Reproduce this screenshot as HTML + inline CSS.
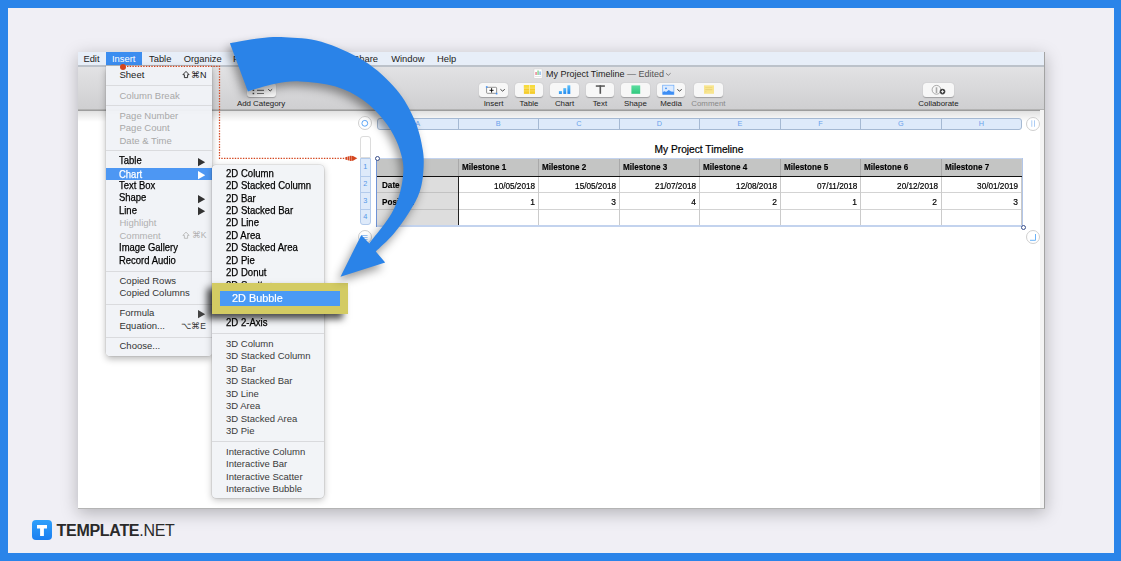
<!DOCTYPE html>
<html><head><meta charset="utf-8"><style>
html,body{margin:0;padding:0;}
body{width:1121px;height:561px;position:relative;overflow:hidden;background:#2a84e9;font-family:"Liberation Sans", sans-serif;}
</style></head><body>
<div style="position:absolute;left:8px;top:8px;width:1106px;height:545px;background:#f0eff5;"></div>
<div style="position:absolute;left:78px;top:52px;width:967px;height:457px;background:#fff;box-shadow:0 4px 16px rgba(0,0,0,.26);"></div>
<div style="position:absolute;left:78px;top:52px;width:967px;height:13px;background:#e7eef8;"></div>
<div style="position:absolute;left:78px;top:65px;width:967px;height:1.5999999999999943px;background:#bcc2ca;"></div>
<div style="position:absolute;left:78px;top:66.6px;width:967px;height:42.400000000000006px;background:linear-gradient(#e2e2e4,#cfcfd1);"></div>
<div style="position:absolute;left:78px;top:109px;width:967px;height:1.5px;background:#b3b3b3;"></div>
<div style="position:absolute;left:78px;top:110px;width:962px;height:12px;background:linear-gradient(rgba(0,0,0,.13),rgba(0,0,0,0));"></div>
<div style="position:absolute;left:1040px;top:110px;width:4px;height:398px;background:#f4f4f4;"></div>
<div style="position:absolute;left:1044px;top:52px;width:1px;height:457px;background:#a3a3a3;"></div>
<div style="position:absolute;left:78px;top:508px;width:967px;height:1px;background:#b4b4b4;"></div>
<div style="position:absolute;left:83.4px;top:54.34px;font-size:9.4px;line-height:10.81px;color:#222;font-weight:normal;white-space:nowrap;">Edit</div>
<div style="position:absolute;left:106px;top:52px;width:36px;height:13px;background:#3b8df0;"></div>
<div style="position:absolute;left:112px;top:54.34px;font-size:9.4px;line-height:10.81px;color:#fff;font-weight:normal;white-space:nowrap;">Insert</div>
<div style="position:absolute;left:149px;top:54.34px;font-size:9.4px;line-height:10.81px;color:#222;font-weight:normal;white-space:nowrap;">Table</div>
<div style="position:absolute;left:183.7px;top:54.34px;font-size:9.4px;line-height:10.81px;color:#222;font-weight:normal;white-space:nowrap;">Organize</div>
<div style="position:absolute;left:233px;top:54.34px;font-size:9.4px;line-height:10.81px;color:#222;font-weight:normal;white-space:nowrap;">Format</div>
<div style="position:absolute;left:283px;top:54.34px;font-size:9.4px;line-height:10.81px;color:#222;font-weight:normal;white-space:nowrap;">Arrange</div>
<div style="position:absolute;left:325px;top:54.34px;font-size:9.4px;line-height:10.81px;color:#222;font-weight:normal;white-space:nowrap;">View</div>
<div style="position:absolute;left:353px;top:54.34px;font-size:9.4px;line-height:10.81px;color:#222;font-weight:normal;white-space:nowrap;">Share</div>
<div style="position:absolute;left:391.2px;top:54.34px;font-size:9.4px;line-height:10.81px;color:#222;font-weight:normal;white-space:nowrap;">Window</div>
<div style="position:absolute;left:437px;top:54.34px;font-size:9.4px;line-height:10.81px;color:#222;font-weight:normal;white-space:nowrap;">Help</div>
<div style="position:absolute;left:246.7px;top:83px;width:29.30000000000001px;height:13.5px;background:#f7f7f7;border-radius:3px;box-shadow:0 0.5px 1px rgba(0,0,0,.25);"></div>
<div style="position:absolute;left:221.0px;width:80px;top:99.02px;font-size:7.9px;line-height:9.08px;color:#222;font-weight:normal;white-space:nowrap;text-align:center;">Add Category</div>
<div style="position:absolute;left:534px;top:69px;width:8px;height:9px;background:#fff;border:0.5px solid #bbb;box-sizing:border-box;"></div>
<div style="position:absolute;left:545.9px;top:68.71px;font-size:9px;line-height:10.35px;color:#222;font-weight:normal;white-space:nowrap;">My Project Timeline <span style="color:#555">— Edited</span></div>
<div style="position:absolute;left:479.2px;top:83px;width:28.600000000000023px;height:14px;background:#f7f7f7;border-radius:3px;box-shadow:0 0.5px 1px rgba(0,0,0,.25);"></div>
<div style="position:absolute;left:463.5px;width:60px;top:99.02px;font-size:7.9px;line-height:9.08px;color:#222;font-weight:normal;white-space:nowrap;text-align:center;">Insert</div>
<div style="position:absolute;left:514.6px;top:83px;width:28.899999999999977px;height:14px;background:#f7f7f7;border-radius:3px;box-shadow:0 0.5px 1px rgba(0,0,0,.25);"></div>
<div style="position:absolute;left:499.04999999999995px;width:60px;top:99.02px;font-size:7.9px;line-height:9.08px;color:#222;font-weight:normal;white-space:nowrap;text-align:center;">Table</div>
<div style="position:absolute;left:550.2px;top:83px;width:28.699999999999932px;height:14px;background:#f7f7f7;border-radius:3px;box-shadow:0 0.5px 1px rgba(0,0,0,.25);"></div>
<div style="position:absolute;left:534.55px;width:60px;top:99.02px;font-size:7.9px;line-height:9.08px;color:#222;font-weight:normal;white-space:nowrap;text-align:center;">Chart</div>
<div style="position:absolute;left:585.7px;top:83px;width:28.399999999999977px;height:14px;background:#f7f7f7;border-radius:3px;box-shadow:0 0.5px 1px rgba(0,0,0,.25);"></div>
<div style="position:absolute;left:569.9000000000001px;width:60px;top:99.02px;font-size:7.9px;line-height:9.08px;color:#222;font-weight:normal;white-space:nowrap;text-align:center;">Text</div>
<div style="position:absolute;left:621px;top:83px;width:28.799999999999955px;height:14px;background:#f7f7f7;border-radius:3px;box-shadow:0 0.5px 1px rgba(0,0,0,.25);"></div>
<div style="position:absolute;left:605.4px;width:60px;top:99.02px;font-size:7.9px;line-height:9.08px;color:#222;font-weight:normal;white-space:nowrap;text-align:center;">Shape</div>
<div style="position:absolute;left:657px;top:83px;width:28.100000000000023px;height:14px;background:#f7f7f7;border-radius:3px;box-shadow:0 0.5px 1px rgba(0,0,0,.25);"></div>
<div style="position:absolute;left:641.05px;width:60px;top:99.02px;font-size:7.9px;line-height:9.08px;color:#222;font-weight:normal;white-space:nowrap;text-align:center;">Media</div>
<div style="position:absolute;left:694.2px;top:83px;width:28.399999999999977px;height:14px;background:#f7f7f7;border-radius:3px;box-shadow:0 0.5px 1px rgba(0,0,0,.25);"></div>
<div style="position:absolute;left:678.4000000000001px;width:60px;top:99.02px;font-size:7.9px;line-height:9.08px;color:#888;font-weight:normal;white-space:nowrap;text-align:center;">Comment</div>
<div style="position:absolute;left:922.9px;top:82.7px;width:31.300000000000068px;height:14.399999999999991px;background:#f7f7f7;border-radius:3px;box-shadow:0 0.5px 1px rgba(0,0,0,.25);"></div>
<div style="position:absolute;left:908.5px;width:60px;top:98.92px;font-size:7.9px;line-height:9.08px;color:#222;font-weight:normal;white-space:nowrap;text-align:center;">Collaborate</div>
<div style="position:absolute;left:357.8px;top:116.3px;width:14px;height:14px;border-radius:50%;border:1px solid #cfcfcf;box-sizing:border-box;background:#fff;"></div>
<div style="position:absolute;left:1026.3px;top:116.6px;width:14px;height:14px;border-radius:50%;border:1px solid #cfcfcf;box-sizing:border-box;background:#fff;"></div>
<div style="position:absolute;left:357.8px;top:230.3px;width:14px;height:14px;border-radius:50%;border:1px solid #cfcfcf;box-sizing:border-box;background:#fff;"></div>
<div style="position:absolute;left:1026.3px;top:230.2px;width:14px;height:14px;border-radius:50%;border:1px solid #cfcfcf;box-sizing:border-box;background:#fff;"></div>
<div style="position:absolute;left:377.4px;top:118.3px;width:644.2px;height:11.600000000000009px;background:#deeafa;border:1px solid #a5b9d3;border-radius:3px;box-sizing:border-box;"></div>
<div style="position:absolute;left:457.5px;top:118.3px;width:1.0px;height:11.600000000000009px;background:#a5b9d3;"></div>
<div style="position:absolute;left:537.8px;top:118.3px;width:1.0px;height:11.600000000000009px;background:#a5b9d3;"></div>
<div style="position:absolute;left:618.8px;top:118.3px;width:1.0px;height:11.600000000000009px;background:#a5b9d3;"></div>
<div style="position:absolute;left:699.0px;top:118.3px;width:1.0px;height:11.600000000000009px;background:#a5b9d3;"></div>
<div style="position:absolute;left:779.9px;top:118.3px;width:1.0px;height:11.600000000000009px;background:#a5b9d3;"></div>
<div style="position:absolute;left:860.0px;top:118.3px;width:1.0px;height:11.600000000000009px;background:#a5b9d3;"></div>
<div style="position:absolute;left:940.5px;top:118.3px;width:1.0px;height:11.600000000000009px;background:#a5b9d3;"></div>
<div style="position:absolute;left:407.7px;width:20px;top:120.07px;font-size:7.3px;line-height:8.39px;color:#6aa2ec;font-weight:normal;white-space:nowrap;text-align:center;">A</div>
<div style="position:absolute;left:488.15px;width:20px;top:120.07px;font-size:7.3px;line-height:8.39px;color:#6aa2ec;font-weight:normal;white-space:nowrap;text-align:center;">B</div>
<div style="position:absolute;left:568.8px;width:20px;top:120.07px;font-size:7.3px;line-height:8.39px;color:#6aa2ec;font-weight:normal;white-space:nowrap;text-align:center;">C</div>
<div style="position:absolute;left:649.4px;width:20px;top:120.07px;font-size:7.3px;line-height:8.39px;color:#6aa2ec;font-weight:normal;white-space:nowrap;text-align:center;">D</div>
<div style="position:absolute;left:729.95px;width:20px;top:120.07px;font-size:7.3px;line-height:8.39px;color:#6aa2ec;font-weight:normal;white-space:nowrap;text-align:center;">E</div>
<div style="position:absolute;left:810.45px;width:20px;top:120.07px;font-size:7.3px;line-height:8.39px;color:#6aa2ec;font-weight:normal;white-space:nowrap;text-align:center;">F</div>
<div style="position:absolute;left:890.75px;width:20px;top:120.07px;font-size:7.3px;line-height:8.39px;color:#6aa2ec;font-weight:normal;white-space:nowrap;text-align:center;">G</div>
<div style="position:absolute;left:971.3px;width:20px;top:120.07px;font-size:7.3px;line-height:8.39px;color:#6aa2ec;font-weight:normal;white-space:nowrap;text-align:center;">H</div>
<div style="position:absolute;left:359.6px;top:136.3px;width:11.599999999999966px;height:22.099999999999994px;background:#fff;border:1px solid #dcdcdc;border-radius:3px 3px 0 0;box-sizing:border-box;"></div>
<div style="position:absolute;left:359.6px;top:158.4px;width:11.599999999999966px;height:66.6px;background:#deeafa;border:1px solid #b3cbec;border-radius:0 0 3px 3px;box-sizing:border-box;"></div>
<div style="position:absolute;left:359.6px;top:175.8px;width:11.599999999999966px;height:1.0px;background:#b3cbec;"></div>
<div style="position:absolute;left:359.6px;top:192.2px;width:11.599999999999966px;height:1.0px;background:#b3cbec;"></div>
<div style="position:absolute;left:359.6px;top:209.1px;width:11.599999999999966px;height:1.0px;background:#b3cbec;"></div>
<div style="position:absolute;left:359.4px;width:12px;top:163.32px;font-size:7.3px;line-height:8.39px;color:#5597e8;font-weight:normal;white-space:nowrap;text-align:center;">1</div>
<div style="position:absolute;left:359.4px;width:12px;top:180.47px;font-size:7.3px;line-height:8.39px;color:#5597e8;font-weight:normal;white-space:nowrap;text-align:center;">2</div>
<div style="position:absolute;left:359.4px;width:12px;top:197.12px;font-size:7.3px;line-height:8.39px;color:#5597e8;font-weight:normal;white-space:nowrap;text-align:center;">3</div>
<div style="position:absolute;left:359.4px;width:12px;top:213.27px;font-size:7.3px;line-height:8.39px;color:#5597e8;font-weight:normal;white-space:nowrap;text-align:center;">4</div>
<div style="position:absolute;left:599.0px;width:200px;top:143.50px;font-size:10.2px;line-height:11.73px;color:#000;font-weight:normal;white-space:nowrap;text-align:center;-webkit-text-stroke:0.2px #000;">My Project Timeline</div>
<div style="position:absolute;left:377px;top:158.5px;width:644.5px;height:67.5px;background:#fff;"></div>
<div style="position:absolute;left:377px;top:158.5px;width:644.5px;height:18.0px;background:#c4c5c4;"></div>
<div style="position:absolute;left:377px;top:176.5px;width:81px;height:49.5px;background:#dddddd;"></div>
<div style="position:absolute;left:377px;top:192.3px;width:81px;height:1.0px;background:#c2c2c2;"></div>
<div style="position:absolute;left:458px;top:192.3px;width:563.5px;height:1.0px;background:#d3d3d3;"></div>
<div style="position:absolute;left:377px;top:209.1px;width:81px;height:1.0px;background:#c2c2c2;"></div>
<div style="position:absolute;left:458px;top:209.1px;width:563.5px;height:1.0px;background:#d3d3d3;"></div>
<div style="position:absolute;left:457.5px;top:158.5px;width:1.0px;height:18.0px;background:#a9a9a9;"></div>
<div style="position:absolute;left:457.5px;top:176.5px;width:1.0px;height:49.5px;background:#222;"></div>
<div style="position:absolute;left:537.8px;top:158.5px;width:1.0px;height:18.0px;background:#a9a9a9;"></div>
<div style="position:absolute;left:537.8px;top:176.5px;width:1.0px;height:49.5px;background:#cbcbcb;"></div>
<div style="position:absolute;left:618.8px;top:158.5px;width:1.0px;height:18.0px;background:#a9a9a9;"></div>
<div style="position:absolute;left:618.8px;top:176.5px;width:1.0px;height:49.5px;background:#cbcbcb;"></div>
<div style="position:absolute;left:699.0px;top:158.5px;width:1.0px;height:18.0px;background:#a9a9a9;"></div>
<div style="position:absolute;left:699.0px;top:176.5px;width:1.0px;height:49.5px;background:#cbcbcb;"></div>
<div style="position:absolute;left:779.9px;top:158.5px;width:1.0px;height:18.0px;background:#a9a9a9;"></div>
<div style="position:absolute;left:779.9px;top:176.5px;width:1.0px;height:49.5px;background:#cbcbcb;"></div>
<div style="position:absolute;left:860.0px;top:158.5px;width:1.0px;height:18.0px;background:#a9a9a9;"></div>
<div style="position:absolute;left:860.0px;top:176.5px;width:1.0px;height:49.5px;background:#cbcbcb;"></div>
<div style="position:absolute;left:940.5px;top:158.5px;width:1.0px;height:18.0px;background:#a9a9a9;"></div>
<div style="position:absolute;left:940.5px;top:176.5px;width:1.0px;height:49.5px;background:#cbcbcb;"></div>
<div style="position:absolute;left:1020.5px;top:158.5px;width:1.0px;height:67.5px;background:#c8c8c8;"></div>
<div style="position:absolute;left:377px;top:175.8px;width:644.5px;height:1.1999999999999886px;background:#111;"></div>
<div style="position:absolute;left:377px;top:157.5px;width:645.5px;height:1.5px;background:#c3d3ee;"></div>
<div style="position:absolute;left:377px;top:225.3px;width:645.5px;height:1.5px;background:#c3d3ee;"></div>
<div style="position:absolute;left:376.2px;top:158px;width:1.1999999999999886px;height:68.5px;background:#6f93d6;"></div>
<div style="position:absolute;left:1021.6px;top:158px;width:1.1999999999999318px;height:68.5px;background:#b2c6e8;"></div>
<div style="position:absolute;left:374.6px;top:156px;width:3.4px;height:3.4px;border-radius:50%;border:1px solid #3a4f8a;background:#fff;"></div>
<div style="position:absolute;left:1020.6px;top:224.8px;width:3.4px;height:3.4px;border-radius:50%;border:1px solid #3a4f8a;background:#fff;"></div>
<div style="position:absolute;left:461.8px;top:162.95px;font-size:8.3px;line-height:9.54px;color:#000;font-weight:bold;white-space:nowrap;-webkit-text-stroke:0.15px #000;transform:scaleX(0.98);transform-origin:left center;">Milestone 1</div>
<div style="position:absolute;left:542.0999999999999px;top:162.95px;font-size:8.3px;line-height:9.54px;color:#000;font-weight:bold;white-space:nowrap;-webkit-text-stroke:0.15px #000;transform:scaleX(0.98);transform-origin:left center;">Milestone 2</div>
<div style="position:absolute;left:623.0999999999999px;top:162.95px;font-size:8.3px;line-height:9.54px;color:#000;font-weight:bold;white-space:nowrap;-webkit-text-stroke:0.15px #000;transform:scaleX(0.98);transform-origin:left center;">Milestone 3</div>
<div style="position:absolute;left:703.3px;top:162.95px;font-size:8.3px;line-height:9.54px;color:#000;font-weight:bold;white-space:nowrap;-webkit-text-stroke:0.15px #000;transform:scaleX(0.98);transform-origin:left center;">Milestone 4</div>
<div style="position:absolute;left:784.1999999999999px;top:162.95px;font-size:8.3px;line-height:9.54px;color:#000;font-weight:bold;white-space:nowrap;-webkit-text-stroke:0.15px #000;transform:scaleX(0.98);transform-origin:left center;">Milestone 5</div>
<div style="position:absolute;left:864.3px;top:162.95px;font-size:8.3px;line-height:9.54px;color:#000;font-weight:bold;white-space:nowrap;-webkit-text-stroke:0.15px #000;transform:scaleX(0.98);transform-origin:left center;">Milestone 6</div>
<div style="position:absolute;left:944.8px;top:162.95px;font-size:8.3px;line-height:9.54px;color:#000;font-weight:bold;white-space:nowrap;-webkit-text-stroke:0.15px #000;transform:scaleX(0.98);transform-origin:left center;">Milestone 7</div>
<div style="position:absolute;right:585.9000000000001px;top:181.09px;font-size:8.8px;line-height:10.12px;color:#000;font-weight:normal;white-space:nowrap;text-align:right;-webkit-text-stroke:0.2px #000;transform:scaleX(0.93);transform-origin:right center;">10/05/2018</div>
<div style="position:absolute;right:586.5px;top:197.29px;font-size:8.8px;line-height:10.12px;color:#000;font-weight:normal;white-space:nowrap;text-align:right;-webkit-text-stroke:0.2px #000;transform:scaleX(0.96);transform-origin:right center;">1</div>
<div style="position:absolute;right:504.9000000000001px;top:181.09px;font-size:8.8px;line-height:10.12px;color:#000;font-weight:normal;white-space:nowrap;text-align:right;-webkit-text-stroke:0.2px #000;transform:scaleX(0.93);transform-origin:right center;">15/05/2018</div>
<div style="position:absolute;right:505.5px;top:197.29px;font-size:8.8px;line-height:10.12px;color:#000;font-weight:normal;white-space:nowrap;text-align:right;-webkit-text-stroke:0.2px #000;transform:scaleX(0.96);transform-origin:right center;">3</div>
<div style="position:absolute;right:424.70000000000005px;top:181.09px;font-size:8.8px;line-height:10.12px;color:#000;font-weight:normal;white-space:nowrap;text-align:right;-webkit-text-stroke:0.2px #000;transform:scaleX(0.93);transform-origin:right center;">21/07/2018</div>
<div style="position:absolute;right:425.29999999999995px;top:197.29px;font-size:8.8px;line-height:10.12px;color:#000;font-weight:normal;white-space:nowrap;text-align:right;-webkit-text-stroke:0.2px #000;transform:scaleX(0.96);transform-origin:right center;">4</div>
<div style="position:absolute;right:343.80000000000007px;top:181.09px;font-size:8.8px;line-height:10.12px;color:#000;font-weight:normal;white-space:nowrap;text-align:right;-webkit-text-stroke:0.2px #000;transform:scaleX(0.93);transform-origin:right center;">12/08/2018</div>
<div style="position:absolute;right:344.4px;top:197.29px;font-size:8.8px;line-height:10.12px;color:#000;font-weight:normal;white-space:nowrap;text-align:right;-webkit-text-stroke:0.2px #000;transform:scaleX(0.96);transform-origin:right center;">2</div>
<div style="position:absolute;right:263.70000000000005px;top:181.09px;font-size:8.8px;line-height:10.12px;color:#000;font-weight:normal;white-space:nowrap;text-align:right;-webkit-text-stroke:0.2px #000;transform:scaleX(0.93);transform-origin:right center;">07/11/2018</div>
<div style="position:absolute;right:264.29999999999995px;top:197.29px;font-size:8.8px;line-height:10.12px;color:#000;font-weight:normal;white-space:nowrap;text-align:right;-webkit-text-stroke:0.2px #000;transform:scaleX(0.96);transform-origin:right center;">1</div>
<div style="position:absolute;right:183.20000000000005px;top:181.09px;font-size:8.8px;line-height:10.12px;color:#000;font-weight:normal;white-space:nowrap;text-align:right;-webkit-text-stroke:0.2px #000;transform:scaleX(0.93);transform-origin:right center;">20/12/2018</div>
<div style="position:absolute;right:183.79999999999995px;top:197.29px;font-size:8.8px;line-height:10.12px;color:#000;font-weight:normal;white-space:nowrap;text-align:right;-webkit-text-stroke:0.2px #000;transform:scaleX(0.96);transform-origin:right center;">2</div>
<div style="position:absolute;right:102.60000000000002px;top:181.09px;font-size:8.8px;line-height:10.12px;color:#000;font-weight:normal;white-space:nowrap;text-align:right;-webkit-text-stroke:0.2px #000;transform:scaleX(0.93);transform-origin:right center;">30/01/2019</div>
<div style="position:absolute;right:103.19999999999993px;top:197.29px;font-size:8.8px;line-height:10.12px;color:#000;font-weight:normal;white-space:nowrap;text-align:right;-webkit-text-stroke:0.2px #000;transform:scaleX(0.96);transform-origin:right center;">3</div>
<div style="position:absolute;left:381.8px;top:181.15px;font-size:8.3px;line-height:9.54px;color:#000;font-weight:bold;white-space:nowrap;-webkit-text-stroke:0.15px #000;transform:scaleX(0.98);transform-origin:left center;">Date</div>
<div style="position:absolute;left:381.8px;top:197.95px;font-size:8.3px;line-height:9.54px;color:#000;font-weight:bold;white-space:nowrap;-webkit-text-stroke:0.15px #000;transform:scaleX(0.98);transform-origin:left center;">Position</div>
<svg style="position:absolute;left:0;top:0" width="1121" height="561">
<!-- add category -->
<rect x="252.6" y="89.6" width="1.6" height="1.4" fill="#444"/><rect x="257" y="89.8" width="7" height="1" fill="#555"/>
<rect x="252.6" y="92.8" width="1.6" height="1.4" fill="#444"/><rect x="257" y="93" width="7" height="0.9" fill="#666"/>
<path d="M268.2 89.2 L270.2 91 L272.2 89.2" fill="none" stroke="#333" stroke-width="0.9"/>
<!-- doc icon -->
<rect x="534" y="69" width="8" height="9.3" fill="#fff" stroke="#d0d0d0" stroke-width="0.5"/>
<rect x="535.2" y="72" width="1.8" height="3" fill="#ee9aa6"/><rect x="537.2" y="70.5" width="1.8" height="4.5" fill="#9fdca8"/><rect x="539.2" y="71.5" width="1.8" height="3.5" fill="#9ec4f0"/>
<rect x="535" y="76" width="6" height="0.5" fill="#ccc"/>
<path d="M666 73.3 L668.3 75.3 L670.6 73.3" fill="none" stroke="#666" stroke-width="0.8"/>
<!-- insert -->
<rect x="486.6" y="87.3" width="10" height="6" rx="0.8" fill="#fff" stroke="#666" stroke-width="0.7"/>
<path d="M489.5 90.3 H493.6 M491.6 88.1 V92.6" stroke="#000" stroke-width="0.9"/>
<rect x="485.9" y="86.2" width="1.6" height="1.6" fill="#3d8ef5"/><rect x="495.8" y="92.8" width="1.6" height="1.6" fill="#3d8ef5"/>
<path d="M500.4 89.3 L502.6 91.1 L504.8 89.3" fill="none" stroke="#333" stroke-width="0.9"/>
<!-- table -->
<rect x="523.9" y="85.1" width="11.1" height="8.8" fill="#f5cd2c"/>
<rect x="523.9" y="85.1" width="11.1" height="2.7" fill="#f7dc3d"/>
<rect x="529.1" y="85.1" width="0.7" height="8.8" fill="#fff5c0"/>
<rect x="523.9" y="87.8" width="11.1" height="0.6" fill="#fff0a8"/>
<rect x="523.9" y="90.7" width="11.1" height="0.5" fill="#fde98a"/>
<!-- chart -->
<defs><linearGradient id="cg" x1="0" y1="0" x2="0" y2="1"><stop offset="0" stop-color="#5ec0fa"/><stop offset="1" stop-color="#1d86ee"/></linearGradient></defs>
<rect x="558.9" y="91" width="3" height="2.9" fill="url(#cg)"/>
<rect x="563.3" y="88.1" width="2.9" height="5.8" fill="url(#cg)"/>
<rect x="567.4" y="85.3" width="2.9" height="8.6" fill="url(#cg)"/>
<!-- text -->
<rect x="595.8" y="85.3" width="9.1" height="1.5" fill="#555"/>
<rect x="599.5" y="85.3" width="1.6" height="8.5" fill="#555"/>
<!-- shape -->
<defs><linearGradient id="sg" x1="0" y1="0" x2="0" y2="1"><stop offset="0" stop-color="#5ddda0"/><stop offset="1" stop-color="#2fc97e"/></linearGradient></defs>
<rect x="631.4" y="85.4" width="8.8" height="8.4" fill="url(#sg)"/>
<!-- media -->
<rect x="662.7" y="85.2" width="11.2" height="9.3" fill="#dcebff" stroke="#6aaaf8" stroke-width="0.7"/>
<circle cx="666" cy="88.3" r="0.9" fill="#3d8ef5"/>
<path d="M662.7 94.5 V92.3 Q664.5 90.6 666 92 L668.8 90 L671 91.6 L673.9 91.8 V94.5 Z" fill="#3d8ef5"/>
<path d="M677.3 89.4 L679.5 91.1 L681.7 89.4" fill="none" stroke="#333" stroke-width="0.9"/>
<!-- comment -->
<rect x="704" y="85.3" width="10" height="8.5" fill="#f8e58f"/>
<rect x="705.3" y="87.2" width="7" height="0.5" fill="#e8cf6a"/><rect x="705.3" y="89.5" width="7" height="0.6" fill="#ddc46a"/><rect x="705.3" y="91.6" width="1" height="0.5" fill="#ddc46a"/>
<!-- collaborate -->
<circle cx="936.5" cy="89.8" r="4.4" fill="none" stroke="#777" stroke-width="0.6"/>
<path d="M936.5 87.3 V93" stroke="#aaa" stroke-width="1.6"/>
<circle cx="942.5" cy="91.6" r="2.8" fill="#444"/>
<path d="M941 91.6 H944 M942.5 90.1 V93.1" stroke="#fff" stroke-width="0.8"/>
<!-- circle buttons icons -->
<circle cx="364.8" cy="123.3" r="2.9" fill="none" stroke="#4d9df5" stroke-width="0.9"/>
<path d="M1031.8 120.3 V126.8 M1034.5 120.3 V126.8" stroke="#8ab8f0" stroke-width="0.7"/>
<path d="M1035.5 234 V240.3 H1030" fill="none" stroke="#5aaaf7" stroke-width="0.9"/>
<path d="M362 235.5 H367.6 M362 237.5 H367.6 M362 239.5 H367.6" stroke="#6aa8f0" stroke-width="0.7"/>
</svg>
<div style="position:absolute;left:106px;top:66px;width:105.5px;height:289.5px;background:rgba(240,243,247,.96);box-shadow:0 3px 7px rgba(0,0,0,.28),0 0 0 0.5px rgba(0,0,0,.1);border-radius:0 0 4px 4px;"></div>
<div style="position:absolute;left:106px;top:167.5px;width:106px;height:12.5px;background:#4d97f3;"></div>
<div style="position:absolute;left:119.5px;top:69.85px;font-size:9.5px;line-height:10.92px;color:#1a1a1a;font-weight:normal;white-space:nowrap;">Sheet</div>
<div style="position:absolute;left:119.5px;top:90.60px;font-size:9.5px;line-height:10.92px;color:#a8a8a8;font-weight:normal;white-space:nowrap;">Column Break</div>
<div style="position:absolute;left:119.5px;top:110.60px;font-size:9.5px;line-height:10.92px;color:#a8a8a8;font-weight:normal;white-space:nowrap;">Page Number</div>
<div style="position:absolute;left:119.5px;top:122.85px;font-size:9.5px;line-height:10.92px;color:#a8a8a8;font-weight:normal;white-space:nowrap;">Page Count</div>
<div style="position:absolute;left:119.5px;top:135.60px;font-size:9.5px;line-height:10.92px;color:#a8a8a8;font-weight:normal;white-space:nowrap;">Date &amp; Time</div>
<div style="position:absolute;left:119.3px;top:155.21px;font-size:10.3px;line-height:11.85px;color:#000;font-weight:normal;white-space:nowrap;-webkit-text-stroke:0.25px #000;transform:scaleX(0.92);transform-origin:left center;">Table</div>
<div style="position:absolute;left:119.3px;top:168.71px;font-size:10.3px;line-height:11.85px;color:#fff;font-weight:normal;white-space:nowrap;-webkit-text-stroke:0.25px #fff;transform:scaleX(0.92);transform-origin:left center;">Chart</div>
<div style="position:absolute;left:119.3px;top:179.91px;font-size:10.3px;line-height:11.85px;color:#000;font-weight:normal;white-space:nowrap;-webkit-text-stroke:0.25px #000;transform:scaleX(0.92);transform-origin:left center;">Text Box</div>
<div style="position:absolute;left:119.3px;top:192.01px;font-size:10.3px;line-height:11.85px;color:#000;font-weight:normal;white-space:nowrap;-webkit-text-stroke:0.25px #000;transform:scaleX(0.92);transform-origin:left center;">Shape</div>
<div style="position:absolute;left:119.3px;top:204.91px;font-size:10.3px;line-height:11.85px;color:#000;font-weight:normal;white-space:nowrap;-webkit-text-stroke:0.25px #000;transform:scaleX(0.92);transform-origin:left center;">Line</div>
<div style="position:absolute;left:119.5px;top:218.35px;font-size:9.5px;line-height:10.92px;color:#b0b0b0;font-weight:normal;white-space:nowrap;">Highlight</div>
<div style="position:absolute;left:119.5px;top:230.55px;font-size:9.5px;line-height:10.92px;color:#b0b0b0;font-weight:normal;white-space:nowrap;">Comment</div>
<div style="position:absolute;left:119.3px;top:242.41px;font-size:10.3px;line-height:11.85px;color:#000;font-weight:normal;white-space:nowrap;-webkit-text-stroke:0.25px #000;transform:scaleX(0.92);transform-origin:left center;">Image Gallery</div>
<div style="position:absolute;left:119.3px;top:254.61px;font-size:10.3px;line-height:11.85px;color:#000;font-weight:normal;white-space:nowrap;-webkit-text-stroke:0.25px #000;transform:scaleX(0.92);transform-origin:left center;">Record Audio</div>
<div style="position:absolute;left:119.5px;top:276.15px;font-size:9.5px;line-height:10.92px;color:#333;font-weight:normal;white-space:nowrap;">Copied Rows</div>
<div style="position:absolute;left:119.5px;top:288.35px;font-size:9.5px;line-height:10.92px;color:#333;font-weight:normal;white-space:nowrap;">Copied Columns</div>
<div style="position:absolute;left:119.5px;top:308.15px;font-size:9.5px;line-height:10.92px;color:#333;font-weight:normal;white-space:nowrap;">Formula</div>
<div style="position:absolute;left:119.5px;top:321.35px;font-size:9.5px;line-height:10.92px;color:#333;font-weight:normal;white-space:nowrap;">Equation...</div>
<div style="position:absolute;left:119.5px;top:341.25px;font-size:9.5px;line-height:10.92px;color:#333;font-weight:normal;white-space:nowrap;">Choose...</div>
<div style="position:absolute;left:106px;top:85.0px;width:105.5px;height:1.0px;background:#dadbde;"></div>
<div style="position:absolute;left:106px;top:105.2px;width:105.5px;height:1.0px;background:#dadbde;"></div>
<div style="position:absolute;left:106px;top:150.25px;width:105.5px;height:1.0px;background:#dadbde;"></div>
<div style="position:absolute;left:106px;top:270.9px;width:105.5px;height:1.0px;background:#dadbde;"></div>
<div style="position:absolute;left:106px;top:304.0px;width:105.5px;height:1.0px;background:#dadbde;"></div>
<div style="position:absolute;left:106px;top:336.7px;width:105.5px;height:1.0px;background:#dadbde;"></div>
<div style="position:absolute;right:914.5px;top:70.31px;font-size:9px;line-height:10.35px;color:#1a1a1a;font-weight:normal;white-space:nowrap;text-align:right;">&#8984;N</div>
<svg style="position:absolute;left:0;top:0" width="1121" height="561"><path d="M186 71.4 L189.1 74.7 H187.6 V77.6 H184.4 V74.7 H182.9 Z" fill="none" stroke="#222" stroke-width="0.9" stroke-linejoin="round"/><path d="M186 232.1 L189.1 235.4 H187.6 V238.3 H184.4 V235.4 H182.9 Z" fill="none" stroke="#b8b8b8" stroke-width="0.9" stroke-linejoin="round"/></svg>
<div style="position:absolute;right:914.5px;top:231.47px;font-size:8.5px;line-height:9.77px;color:#b0b0b0;font-weight:normal;white-space:nowrap;text-align:right;">&#8984;K</div>
<div style="position:absolute;right:915px;top:322.27px;font-size:8.5px;line-height:9.77px;color:#333;font-weight:normal;white-space:nowrap;text-align:right;">&#8997;&#8984;E</div>
<div style="position:absolute;left:197.8px;top:154.72px;font-size:10.5px;line-height:12.07px;color:#333;font-weight:normal;white-space:nowrap;transform:scaleX(0.85);transform-origin:left center;">&#9654;</div>
<div style="position:absolute;left:197.8px;top:168.22px;font-size:10.5px;line-height:12.07px;color:#fff;font-weight:normal;white-space:nowrap;transform:scaleX(0.85);transform-origin:left center;">&#9654;</div>
<div style="position:absolute;left:197.8px;top:191.52px;font-size:10.5px;line-height:12.07px;color:#333;font-weight:normal;white-space:nowrap;transform:scaleX(0.85);transform-origin:left center;">&#9654;</div>
<div style="position:absolute;left:197.8px;top:204.42px;font-size:10.5px;line-height:12.07px;color:#333;font-weight:normal;white-space:nowrap;transform:scaleX(0.85);transform-origin:left center;">&#9654;</div>
<div style="position:absolute;left:197.8px;top:307.02px;font-size:10.5px;line-height:12.07px;color:#444;font-weight:normal;white-space:nowrap;transform:scaleX(0.85);transform-origin:left center;">&#9654;</div>
<svg style="position:absolute;left:0;top:0" width="1121" height="561">
<path d="M127 66.3 H219.5 V158.3 H345" fill="none" stroke="#d4461f" stroke-width="1.25" stroke-dasharray="1.4 1.3"/>
<polygon points="345.3,157.2 350.5,155.7 353,155.9 357.3,158.3 353,160.8 350.5,161 345.3,159.5" fill="#d4461f"/>
<rect x="347.1" y="155" width="0.6" height="7" fill="#fff" opacity=".75"/><rect x="349.1" y="155" width="0.6" height="7" fill="#fff" opacity=".75"/><rect x="351.2" y="155" width="0.5" height="7" fill="#fff" opacity=".6"/>
</svg>
<div style="position:absolute;left:120.4px;top:63.8px;width:6px;height:6px;border-radius:50%;background:#d4461f;"></div>
<div style="position:absolute;left:212px;top:164.5px;width:111.5px;height:333.5px;background:#f2f4f7;box-shadow:0 2px 7px rgba(0,0,0,.25),0 0 0 0.6px rgba(0,0,0,.13);border-radius:4px;"></div>
<div style="position:absolute;left:225.6px;top:167.61px;font-size:10.3px;line-height:11.85px;color:#000;font-weight:normal;white-space:nowrap;-webkit-text-stroke:0.25px #000;transform:scaleX(0.93);transform-origin:left center;">2D Column</div>
<div style="position:absolute;left:225.6px;top:180.06px;font-size:10.3px;line-height:11.85px;color:#000;font-weight:normal;white-space:nowrap;-webkit-text-stroke:0.25px #000;transform:scaleX(0.93);transform-origin:left center;">2D Stacked Column</div>
<div style="position:absolute;left:225.6px;top:192.51px;font-size:10.3px;line-height:11.85px;color:#000;font-weight:normal;white-space:nowrap;-webkit-text-stroke:0.25px #000;transform:scaleX(0.93);transform-origin:left center;">2D Bar</div>
<div style="position:absolute;left:225.6px;top:204.96px;font-size:10.3px;line-height:11.85px;color:#000;font-weight:normal;white-space:nowrap;-webkit-text-stroke:0.25px #000;transform:scaleX(0.93);transform-origin:left center;">2D Stacked Bar</div>
<div style="position:absolute;left:225.6px;top:217.41px;font-size:10.3px;line-height:11.85px;color:#000;font-weight:normal;white-space:nowrap;-webkit-text-stroke:0.25px #000;transform:scaleX(0.93);transform-origin:left center;">2D Line</div>
<div style="position:absolute;left:225.6px;top:229.86px;font-size:10.3px;line-height:11.85px;color:#000;font-weight:normal;white-space:nowrap;-webkit-text-stroke:0.25px #000;transform:scaleX(0.93);transform-origin:left center;">2D Area</div>
<div style="position:absolute;left:225.6px;top:242.31px;font-size:10.3px;line-height:11.85px;color:#000;font-weight:normal;white-space:nowrap;-webkit-text-stroke:0.25px #000;transform:scaleX(0.93);transform-origin:left center;">2D Stacked Area</div>
<div style="position:absolute;left:225.6px;top:254.76px;font-size:10.3px;line-height:11.85px;color:#000;font-weight:normal;white-space:nowrap;-webkit-text-stroke:0.25px #000;transform:scaleX(0.93);transform-origin:left center;">2D Pie</div>
<div style="position:absolute;left:225.6px;top:267.21px;font-size:10.3px;line-height:11.85px;color:#000;font-weight:normal;white-space:nowrap;-webkit-text-stroke:0.25px #000;transform:scaleX(0.93);transform-origin:left center;">2D Donut</div>
<div style="position:absolute;left:225.6px;top:279.66px;font-size:10.3px;line-height:11.85px;color:#000;font-weight:normal;white-space:nowrap;-webkit-text-stroke:0.25px #000;transform:scaleX(0.93);transform-origin:left center;">2D Scatter</div>
<div style="position:absolute;left:225.6px;top:317.21px;font-size:10.3px;line-height:11.85px;color:#000;font-weight:normal;white-space:nowrap;-webkit-text-stroke:0.25px #000;transform:scaleX(0.93);transform-origin:left center;">2D 2-Axis</div>
<div style="position:absolute;left:212px;top:333.0px;width:111.5px;height:1.0px;background:#d9dadd;"></div>
<div style="position:absolute;left:212px;top:441.1px;width:111.5px;height:1.0px;background:#d9dadd;"></div>
<div style="position:absolute;left:226px;top:338.75px;font-size:9.5px;line-height:10.92px;color:#3a3a3a;font-weight:normal;white-space:nowrap;">3D Column</div>
<div style="position:absolute;left:226px;top:351.25px;font-size:9.5px;line-height:10.92px;color:#3a3a3a;font-weight:normal;white-space:nowrap;">3D Stacked Column</div>
<div style="position:absolute;left:226px;top:363.75px;font-size:9.5px;line-height:10.92px;color:#3a3a3a;font-weight:normal;white-space:nowrap;">3D Bar</div>
<div style="position:absolute;left:226px;top:376.25px;font-size:9.5px;line-height:10.92px;color:#3a3a3a;font-weight:normal;white-space:nowrap;">3D Stacked Bar</div>
<div style="position:absolute;left:226px;top:388.75px;font-size:9.5px;line-height:10.92px;color:#3a3a3a;font-weight:normal;white-space:nowrap;">3D Line</div>
<div style="position:absolute;left:226px;top:401.25px;font-size:9.5px;line-height:10.92px;color:#3a3a3a;font-weight:normal;white-space:nowrap;">3D Area</div>
<div style="position:absolute;left:226px;top:413.75px;font-size:9.5px;line-height:10.92px;color:#3a3a3a;font-weight:normal;white-space:nowrap;">3D Stacked Area</div>
<div style="position:absolute;left:226px;top:426.25px;font-size:9.5px;line-height:10.92px;color:#3a3a3a;font-weight:normal;white-space:nowrap;">3D Pie</div>
<div style="position:absolute;left:226px;top:446.85px;font-size:9.5px;line-height:10.92px;color:#3a3a3a;font-weight:normal;white-space:nowrap;">Interactive Column</div>
<div style="position:absolute;left:226px;top:459.30px;font-size:9.5px;line-height:10.92px;color:#3a3a3a;font-weight:normal;white-space:nowrap;">Interactive Bar</div>
<div style="position:absolute;left:226px;top:471.75px;font-size:9.5px;line-height:10.92px;color:#3a3a3a;font-weight:normal;white-space:nowrap;">Interactive Scatter</div>
<div style="position:absolute;left:226px;top:484.20px;font-size:9.5px;line-height:10.92px;color:#3a3a3a;font-weight:normal;white-space:nowrap;">Interactive Bubble</div>
<div style="position:absolute;left:212.4px;top:283.3px;width:135.70000000000002px;height:30.69999999999999px;background:#d3cb63;box-shadow:-5px 5px 7px rgba(0,0,0,.7);"></div>
<div style="position:absolute;left:220.4px;top:291.1px;width:119.9px;height:14.899999999999977px;background:#4a9af5;"></div>
<div style="position:absolute;left:231.6px;top:292.48px;font-size:11.2px;line-height:12.88px;color:#fff;font-weight:normal;white-space:nowrap;-webkit-text-stroke:0.2px #fff;transform:scaleX(0.97);transform-origin:left center;">2D Bubble</div>
<svg style="position:absolute;left:0;top:0;filter:drop-shadow(-3px 5px 5px rgba(0,0,0,.4))" width="1121" height="561">
<path d="M229.9 43.2 C234.9 42.4 250.8 39.3 260.0 38.3 C269.2 37.3 274.8 36.7 285.0 37.3 C295.2 37.9 308.2 37.8 321.4 41.8 C334.6 45.8 351.7 53.1 364.2 61.0 C376.7 68.9 388.0 79.6 396.4 89.4 C404.8 99.2 410.2 109.9 414.6 120.0 C419.0 130.1 421.4 141.3 422.8 150.0 C424.2 158.7 423.8 165.0 423.3 172.0 C422.8 179.0 421.9 185.3 419.6 192.0 C417.3 198.7 413.7 205.0 409.3 212.0 C404.9 219.0 399.1 227.4 393.5 234.0 C387.9 240.6 378.8 248.5 375.8 251.4 L385.2 262.5 L340.5 276.7 L361.3 234.9 L369.3 243.4 C372.8 238.8 385.1 223.9 390.0 216.0 C394.9 208.1 396.8 202.7 399.0 196.0 C401.2 189.3 402.4 182.0 403.0 176.0 C403.6 170.0 403.7 166.0 402.5 160.0 C401.3 154.0 399.1 146.7 396.0 140.0 C392.9 133.3 389.1 126.7 383.6 120.0 C378.1 113.3 371.0 105.6 363.0 100.0 C355.0 94.4 346.2 89.5 335.7 86.4 C325.2 83.3 310.1 81.8 300.0 81.4 C289.9 81.0 283.7 82.1 275.0 83.8 C266.3 85.5 252.4 90.1 247.9 91.4 Z" fill="#2a83e8"/>
</svg>
<div style="position:absolute;left:32px;top:520px;width:20px;height:20px;border-radius:4px;background:linear-gradient(#2fa0fb,#1b7ff0);"></div>
<svg style="position:absolute;left:32px;top:520px" width="20" height="20"><path d="M5 5 H15 V8.6 H11.9 V16 H8.1 V8.6 H5 Z" fill="#fff"/></svg>
<div style="position:absolute;left:56.6px;top:521.66px;font-size:16px;line-height:18.40px;color:#2a2a2a;font-weight:bold;white-space:nowrap;letter-spacing:-0.3px;">TEMPLATE<span style="font-weight:normal">.NET</span></div>
</body></html>
